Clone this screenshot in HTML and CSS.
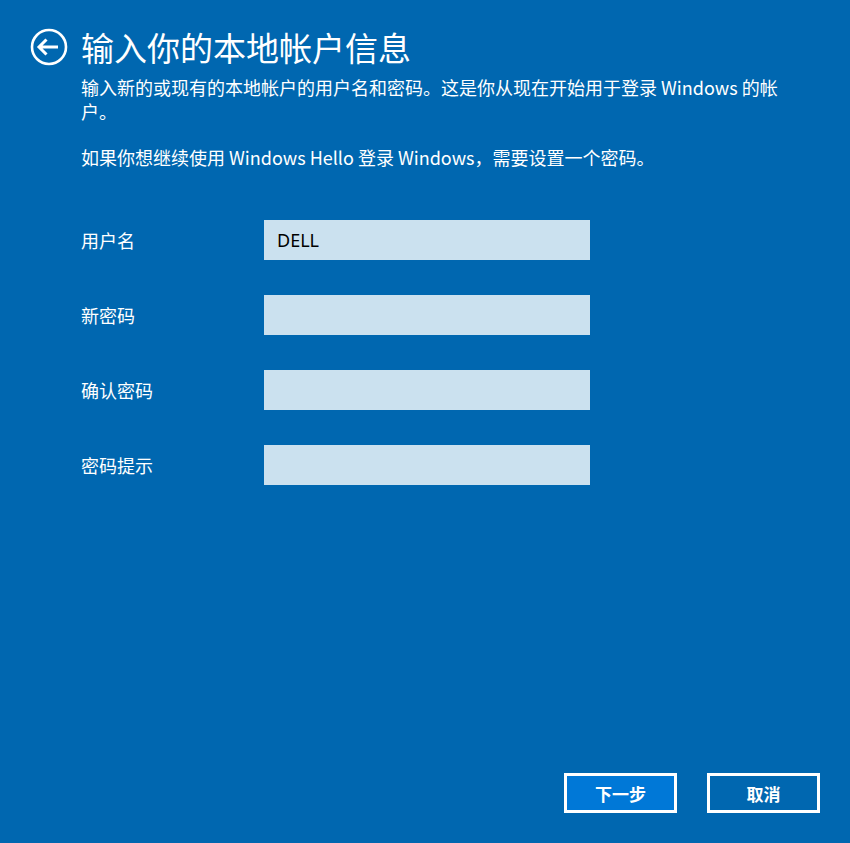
FILE: index.html
```html
<!DOCTYPE html>
<html lang="zh-CN">

<head>
    <meta charset="UTF-8">
    <meta name="viewport" content="width=device-width, initial-scale=1.0">
    <title>输入你的本地帐户信息</title>
    <link rel="stylesheet" href="styles.css">
</head>

<body>
    <div class="page">
        <div class="header">
            <button class="back" aria-label="返回">
                <svg width="38" height="38" viewBox="0 0 38 38">
                    <circle cx="19" cy="19" r="17" fill="none" stroke="#fff" stroke-width="2.6" />
                    <path d="M9 19 H28 M16.5 11.5 L9 19 L16.5 26.5" fill="none" stroke="#fff" stroke-width="3" stroke-linejoin="miter" />
                </svg>
            </button>
            <h1 class="title">输入你的本地帐户信息</h1>
        </div>

        <div class="content">
            <p class="desc">输入新的或现有的本地帐户的用户名和密码。这是你从现在开始用于登录 Windows 的帐户。</p>
            <p class="desc second">如果你想继续使用 Windows Hello 登录 Windows，需要设置一个密码。</p>

            <div class="form">
                <div class="row">
                    <label class="label" for="username">用户名</label>
                    <input id="username" class="field" type="text" value="DELL">
                </div>
                <div class="row">
                    <label class="label" for="newpass">新密码</label>
                    <input id="newpass" class="field" type="password">
                </div>
                <div class="row">
                    <label class="label" for="confirm">确认密码</label>
                    <input id="confirm" class="field" type="password">
                </div>
                <div class="row">
                    <label class="label" for="hint">密码提示</label>
                    <input id="hint" class="field" type="text">
                </div>
            </div>
        </div>

        <div class="footer">
            <button class="btn primary">下一步</button>
            <button class="btn">取消</button>
        </div>
    </div>
</body>

</html>
```

FILE: styles.css
```css
body {
    margin: 0;
    overflow: hidden;
    background-color: #0067b0;
    color: white;
    font-family: "Noto Sans CJK SC", "Noto Sans", sans-serif;
}

.page {
    height: 100vh;
    display: flex;
    flex-direction: column;
    box-sizing: border-box;
}

.header {
    display: flex;
    align-items: center;
    padding: 27px 0 0 30px;
    gap: 13px;
}

.back {
    width: 38px;
    height: 38px;
    padding: 0;
    border: none;
    background: none;
    display: flex;
}

.title {
    margin: 0;
    font-size: 33px;
    font-weight: normal;
    line-height: 40px;
    letter-spacing: 0;
}

.content {
    padding-left: 81px;
}

.desc {
    margin: 8px 0 0 0;
    max-width: 712px;
    font-size: 18px;
    line-height: 24px;
}

.desc.second {
    margin-top: 22px;
}

.form {
    margin-top: 51px;
    display: flex;
    flex-direction: column;
    gap: 35px;
}

.row {
    display: flex;
    align-items: center;
}

.label {
    width: 183px;
    font-size: 18px;
    line-height: 24px;
}

.field {
    width: 326px;
    height: 40px;
    box-sizing: border-box;
    border: none;
    outline: none;
    margin: 0;
    padding: 0 13px;
    background-color: #cbe1ef;
    color: #000;
    font-family: "Noto Sans", "Noto Sans CJK SC", sans-serif;
    font-size: 18px;
}

.footer {
    margin-top: auto;
    display: flex;
    justify-content: flex-end;
    gap: 30px;
    padding: 0 30px 30px 0;
}

.btn {
    width: 113px;
    height: 40px;
    box-sizing: border-box;
    border: 3px solid white;
    background-color: transparent;
    color: white;
    font-family: "Noto Sans CJK SC", sans-serif;
    font-size: 17px;
    font-weight: bold;
    padding: 0;
}

.btn.primary {
    background-color: #0078d7;
}
```
